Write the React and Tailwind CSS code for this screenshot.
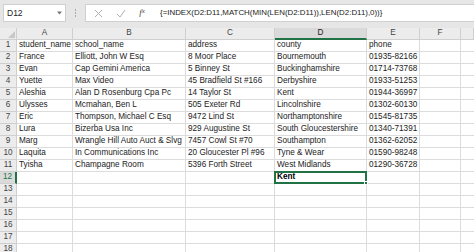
import React from "react";

const cols = ["A", "B", "C", "D", "E", "F", ""];
const data = [
  ["student_name", "school_name", "address", "county", "phone"],
  ["France", "Elliott, John W Esq", "8 Moor Place", "Bournemouth", "01935-82166"],
  ["Evan", "Cap Gemini America", "5 Binney St", "Buckinghamshire", "01714-73768"],
  ["Yuette", "Max Video", "45 Bradfield St #166", "Derbyshire", "01933-51253"],
  ["Aleshia", "Alan D Rosenburg Cpa Pc", "14 Taylor St", "Kent", "01944-36997"],
  ["Ulysses", "Mcmahan, Ben L", "505 Exeter Rd", "Lincolnshire", "01302-60130"],
  ["Eric", "Thompson, Michael C Esq", "9472 Lind St", "Northamptonshire", "01545-81735"],
  ["Lura", "Bizerba Usa Inc", "929 Augustine St", "South Gloucestershire", "01340-71391"],
  ["Marg", "Wrangle Hill Auto Auct & Slvg", "7457 Cowl St #70", "Southampton", "01362-62052"],
  ["Laquita", "In Communications Inc", "20 Gloucester Pl #96", "Tyne & Wear", "01590-98248"],
  ["Tyisha", "Champagne Room", "5396 Forth Street", "West Midlands", "01290-36728"],
  ["", "", "", "", ""],
  ["", "", "", "", ""],
  ["", "", "", "", ""],
  ["", "", "", "", ""],
  ["", "", "", "", ""],
  ["", "", "", "", ""],
  ["", "", "", "", ""],
];

export default function App() {
  return (
    <div
      className="w-[474px] h-[252px] overflow-hidden bg-white text-[#222]"
      style={{ fontFamily: '"Liberation Sans", Arial, sans-serif' }}
    >
      {/* formula bar */}
      <div className="h-[28px] bg-[#e6e6e6] flex items-start pt-[4px] pl-[3px]">
        <div className="w-[63px] h-[18px] bg-white border border-[#d0d0d0] flex items-center justify-between pl-[3px] pr-[3px] text-[8.5px]">
          <span>D12</span>
          <svg width="5" height="4" viewBox="0 0 5 4">
            <path d="M0 0.5 L5 0.5 L2.5 3.5 Z" fill="#777" />
          </svg>
        </div>
        <div className="w-[19px] h-[18px] flex flex-col items-center justify-center gap-[1.5px]">
          <div className="w-[1.5px] h-[1.5px] bg-[#aaa]" />
          <div className="w-[1.5px] h-[1.5px] bg-[#aaa]" />
          <div className="w-[1.5px] h-[1.5px] bg-[#aaa]" />
        </div>
        <div className="flex-1 h-[18px] bg-white border-y border-l border-[#d0d0d0] flex items-center">
          <div className="w-[24px] flex justify-center">
            <svg width="9" height="9" viewBox="0 0 9 9">
              <path d="M1 1 L8 8 M8 1 L1 8" stroke="#b0b0b0" strokeWidth="1" />
            </svg>
          </div>
          <div className="w-[22px] flex justify-center">
            <svg width="10" height="9" viewBox="0 0 10 9">
              <path d="M1 5 L4 8 L9 1" stroke="#b0b0b0" strokeWidth="1" fill="none" />
            </svg>
          </div>
          <div
            className="w-[20px] flex justify-center text-[9px] italic text-[#444]"
            style={{ fontFamily: '"Liberation Serif", serif' }}
          >
            f<span className="text-[7px]">x</span>
          </div>
          <div className="pl-[8px] text-[7.9px] whitespace-nowrap text-[#222]">
            {"{=INDEX(D2:D11,MATCH(MIN(LEN(D2:D11)),LEN(D2:D11),0))}"}
          </div>
        </div>
      </div>

      {/* grid */}
      <div className="grid grid-cols-[17px_56px_113px_89px_92px_53px_41px_13px] auto-rows-[12px] text-[8.2px]">
        {/* corner */}
        <div className="bg-[#ececec] border-r border-b border-[#cfcfcf] relative">
          <svg className="absolute right-[1px] bottom-[1px]" width="7" height="7" viewBox="0 0 7 7">
            <path d="M7 0 L7 7 L0 7 Z" fill="#c8c8c8" />
          </svg>
        </div>
        {cols.map((c, i) =>
          c === "D" ? (
            <div
              key={i}
              className="bg-[#dadada] border-r border-[#cfcfcf] border-b-2 border-b-[#217346] flex items-center justify-center text-[#222]"
            >
              {c}
            </div>
          ) : (
            <div
              key={i}
              className="bg-[#ececec] border-r border-b border-[#cfcfcf] flex items-center justify-center text-[#444]"
            >
              {c}
            </div>
          )
        )}
        {data.map((row, r) => (
          <React.Fragment key={r}>
            {r === 11 ? (
              <div className="bg-[#dadada] border-b border-[#cfcfcf] border-r-2 border-r-[#217346] flex items-center justify-center text-[#217346]">
                {r + 1}
              </div>
            ) : (
              <div className="bg-[#ececec] border-r border-b border-[#cfcfcf] flex items-center justify-center text-[#444]">
                {r + 1}
              </div>
            )}
            {row.map((v, c) =>
              r === 11 && c === 3 ? (
                <div
                  key={c}
                  className="relative border-2 border-[#217346] -mt-[1px] -ml-[1px] h-[13px] flex items-center pl-[1px] font-bold text-black whitespace-nowrap"
                >
                  Kent
                  <div className="absolute -right-[3px] -bottom-[3px] w-[4px] h-[4px] bg-[#217346] border border-white" />
                </div>
              ) : (
                <div
                  key={c}
                  className="border-r border-b border-[#dcdcdc] flex items-center pl-[2px] whitespace-nowrap overflow-visible"
                >
                  {v}
                </div>
              )
            )}
            <div className="border-r border-b border-[#dcdcdc]" />
            <div className="border-b border-[#dcdcdc]" />
          </React.Fragment>
        ))}
      </div>
    </div>
  );
}
